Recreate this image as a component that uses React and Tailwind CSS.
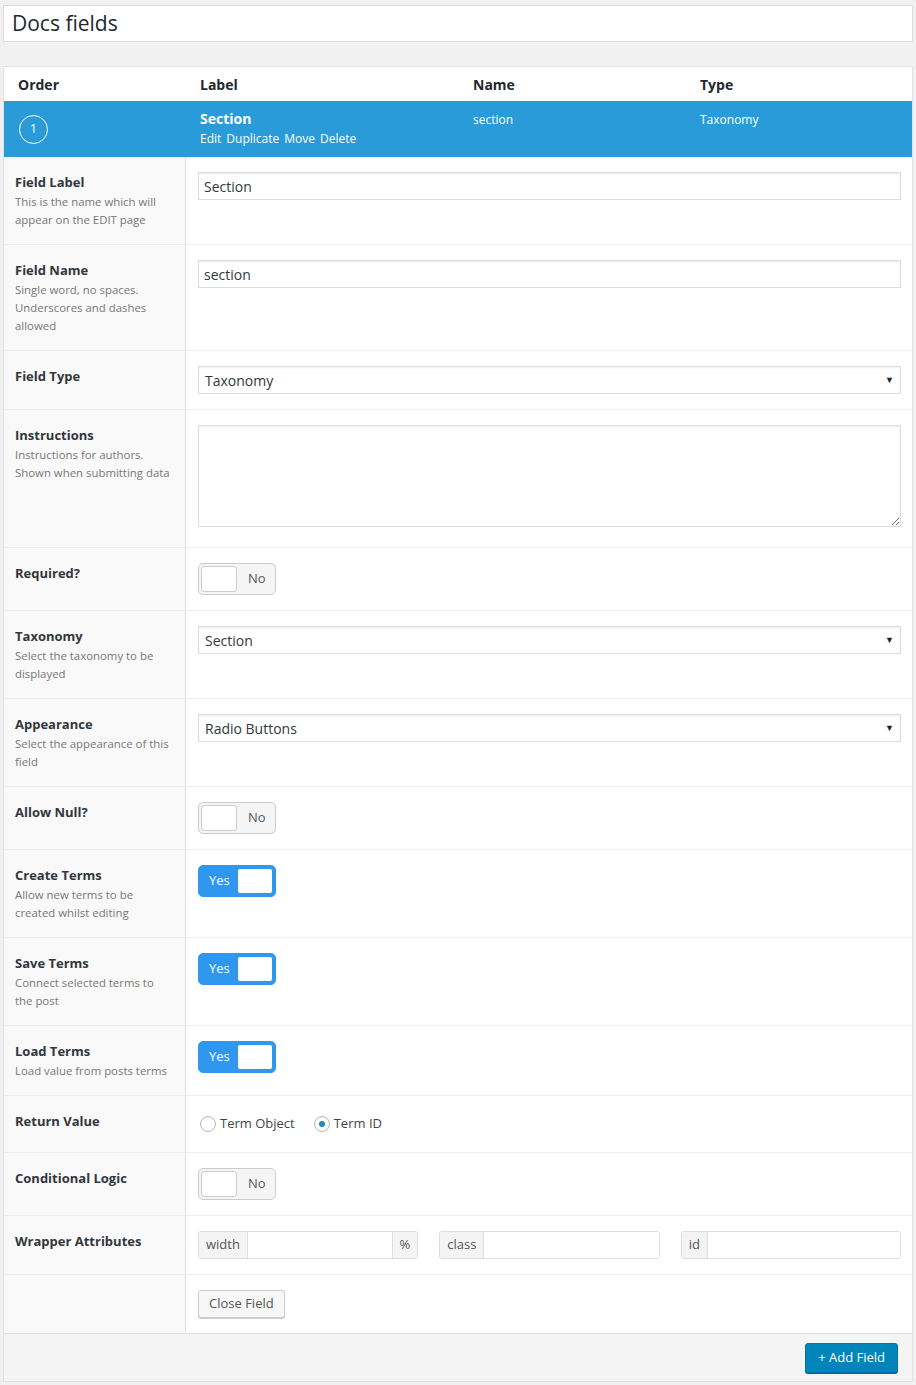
const rows = [
    { label: 'Field Label', desc: ['This is the name which will', 'appear on the EDIT page'], kind: 'input', value: 'Section' },
    { label: 'Field Name', desc: ['Single word, no spaces.', 'Underscores and dashes', 'allowed'], kind: 'input', value: 'section' },
    { label: 'Field Type', kind: 'select', value: 'Taxonomy' },
    { label: 'Instructions', desc: ['Instructions for authors.', 'Shown when submitting data'], kind: 'textarea' },
    { label: 'Required?', kind: 'toggle', on: false },
    { label: 'Taxonomy', desc: ['Select the taxonomy to be', 'displayed'], kind: 'select', value: 'Section' },
    { label: 'Appearance', desc: ['Select the appearance of this', 'field'], kind: 'select', value: 'Radio Buttons' },
    { label: 'Allow Null?', kind: 'toggle', on: false },
    { label: 'Create Terms', desc: ['Allow new terms to be', 'created whilst editing'], kind: 'toggle', on: true },
    { label: 'Save Terms', desc: ['Connect selected terms to', 'the post'], kind: 'toggle', on: true },
    { label: 'Load Terms', desc: ['Load value from posts terms'], kind: 'toggle', on: true },
    { label: 'Return Value', kind: 'radio' },
    { label: 'Conditional Logic', kind: 'toggle', on: false },
    { label: 'Wrapper Attributes', kind: 'wrapper' },
    { label: '', kind: 'close' },
];

const Toggle = ({ on }) => {
    if (on) {
        return (
            <div className="flex h-[32px] w-[78px] items-center justify-between rounded-[5px] border border-[#2f97ee] bg-[#2f97ee] p-[2px] pl-[10px]">
                <span className="text-[13px] text-white">Yes</span>
                <span className="h-[26px] w-[36px] rounded-[3px] border border-[#2f97ee] bg-white"></span>
            </div>
        );
    }
    return (
        <div className="flex h-[32px] w-[78px] items-center rounded-[5px] border border-[#ccc] bg-[#f5f5f5] p-[2px]">
            <span className="h-[26px] w-[36px] rounded-[3px] border border-[#ccc] bg-white"></span>
            <span className="ml-[11px] text-[13px] text-[#555]">No</span>
        </div>
    );
};

const Radio = ({ checked, label }) => (
    <label className="flex items-center gap-[4px] text-[13px] text-[#444]">
        <span className="flex h-[16px] w-[16px] items-center justify-center rounded-full border border-[#b4b9be] bg-white shadow-[inset_0_1px_2px_rgba(0,0,0,0.07)]">
            {checked && <span className="h-[6px] w-[6px] rounded-full bg-[#1e8cbe]"></span>}
        </span>
        {label}
    </label>
);

const Addon = ({ prepend, append }) => (
    <div className="flex h-[28px] flex-1 rounded-[3px] border border-[#ddd] text-[13px] text-[#555]">
        <span className="flex items-center border-r border-[#ddd] bg-[#f4f4f4] px-[7px]">{prepend}</span>
        <span className="flex-1 bg-white"></span>
        {append && <span className="flex items-center border-l border-[#ddd] bg-[#f4f4f4] px-[7px]">{append}</span>}
    </div>
);

const Control = ({ row }) => {
    switch (row.kind) {
        case 'input':
            return (
                <div className="flex h-[28px] items-center border border-[#ddd] bg-white px-[5px] text-[14px] text-[#32373c] shadow-[inset_0_1px_2px_rgba(0,0,0,0.07)]">
                    {row.value}
                </div>
            );
        case 'select':
            return (
                <div className="flex h-[28px] items-center justify-between border border-[#ddd] bg-white pl-[6px] pr-[6px] text-[14px] text-[#32373c] shadow-[inset_0_1px_2px_rgba(0,0,0,0.07)]">
                    <span>{row.value}</span>
                    <span className="text-[9px] text-[#222]">▼</span>
                </div>
            );
        case 'textarea':
            return (
                <textarea
                    readOnly
                    className="mb-[5px] block h-[102px] w-full border border-[#ddd] bg-white shadow-[inset_0_1px_2px_rgba(0,0,0,0.07)] outline-none"
                />
            );
        case 'toggle':
            return <Toggle on={row.on} />;
        case 'radio':
            return (
                <div className="flex h-[26px] items-center gap-[19px] pl-[2px]">
                    <Radio label="Term Object" />
                    <Radio checked label="Term ID" />
                </div>
            );
        case 'wrapper':
            return (
                <div className="flex gap-[21px]">
                    <Addon prepend="width" append="%" />
                    <Addon prepend="class" />
                    <Addon prepend="id" />
                </div>
            );
        case 'close':
            return (
                <button className="block h-[28px] rounded-[3px] border border-[#ccc] bg-[#f7f7f7] px-[10px] text-[13px] text-[#555] shadow-[0_1px_0_#ccc]">
                    Close Field
                </button>
            );
        default:
            return null;
    }
};

export default function App() {
    return (
        <div
            className="min-h-screen bg-[#f1f1f1] px-[3px] pb-[4px] pt-[5px]"
            style={{ fontFamily: '"Open Sans", "Noto Sans", sans-serif' }}
        >
            <div className="flex h-[37px] items-center border border-[#ddd] bg-white pl-[8px] text-[21px] text-[#23282d]">
                Docs fields
            </div>

            <div className="mt-[24px] border border-[#e1e1e1] bg-white">
                {/* column headings */}
                <div className="grid h-[34px] grid-cols-[182px_273px_227px_1fr] items-center text-[14px] font-bold text-[#23282d]">
                    <div className="pl-[14px]">Order</div>
                    <div className="pl-[14px]">Label</div>
                    <div className="pl-[14px]">Name</div>
                    <div className="pl-[14px]">Type</div>
                </div>

                {/* open field handle */}
                <div className="grid h-[56px] grid-cols-[182px_273px_227px_1fr] bg-[#2a9bd9] text-white">
                    <div className="flex items-center pl-[15px]">
                        <span className="flex h-[29px] w-[29px] items-center justify-center rounded-full border border-white text-[12px]">
                            1
                        </span>
                    </div>
                    <div className="pl-[14px] pt-[8px]">
                        <div className="text-[14px] font-bold leading-[20px]">Section</div>
                        <div className="flex gap-[5px] text-[12px] leading-[20px]">
                            <span>Edit</span>
                            <span>Duplicate</span>
                            <span>Move</span>
                            <span>Delete</span>
                        </div>
                    </div>
                    <div className="pl-[14px] pt-[10px] text-[12px] leading-[18px]">section</div>
                    <div className="pl-[14px] pt-[10px] text-[12px] leading-[18px]">Taxonomy</div>
                </div>

                {rows.map((row, i) => (
                    <div key={i} className={`flex ${i > 0 ? 'border-t border-[#eee]' : ''}`}>
                        <div className="w-[182px] shrink-0 border-r border-[#e1e1e1] bg-[#f9f9f9] px-[11px] py-[15px]">
                            {row.label && (
                                <div className="whitespace-nowrap text-[13px] font-bold leading-[21px] text-[#32373c]">
                                    {row.label}
                                </div>
                            )}
                            {row.desc &&
                                row.desc.map((d) => (
                                    <div key={d} className="whitespace-nowrap text-[11.4px] leading-[18px] text-[#777]">
                                        {d}
                                    </div>
                                ))}
                        </div>
                        <div className="flex-1 py-[15px] pl-[12px] pr-[11px]">
                            <Control row={row} />
                        </div>
                    </div>
                ))}

                {/* footer */}
                <div className="flex h-[48px] items-center justify-end border-t border-[#dfdfdf] bg-[#f4f4f4] pr-[14px]">
                    <button className="h-[30px] rounded-[3px] border border-[#0073aa] bg-[#0085ba] px-[12px] text-[13px] text-white shadow-[0_1px_0_#006799]">
                        + Add Field
                    </button>
                </div>
            </div>
        </div>
    );
}
